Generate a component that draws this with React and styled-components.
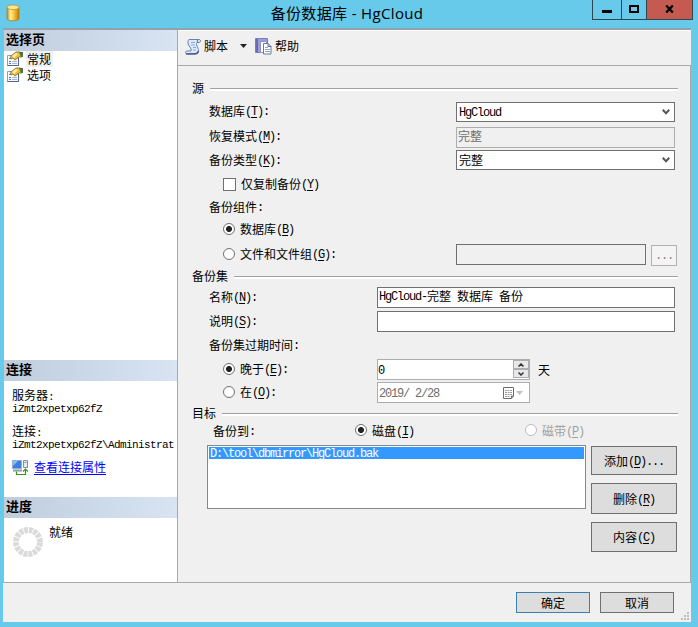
import React from 'react';
import styled, { createGlobalStyle, css } from 'styled-components';

// "&" marks the access key, as in native dialogs
const Caption = ({ children }) => (
  <span>
    {children.split(/([\x20-\x7e]+)/).map((part, i) => {
      if (i % 2 === 0) return part;
      const [before, after] = part.split('&');
      if (after === undefined) return <Latin key={i}>{part}</Latin>;
      return (
        <Latin key={i}>
          {before}
          <AccessKey>{after[0]}</AccessKey>
          {after.slice(1)}
        </Latin>
      );
    })}
  </span>
);

const DatabaseIcon = () => (
  <svg width="14" height="18" viewBox="0 0 14 18">
    <defs>
      <linearGradient id="gold" x1="0" x2="1" y1="0" y2="0">
        <stop offset="0" stopColor="#c98a12" />
        <stop offset="0.3" stopColor="#fff0a0" />
        <stop offset="0.55" stopColor="#fcc93a" />
        <stop offset="1" stopColor="#c07a08" />
      </linearGradient>
    </defs>
    <path d="M1 3.5v11c0 3 12 3 12 0v-11z" fill="url(#gold)" stroke="#a9791f" strokeWidth="0.7" />
    <ellipse cx="7" cy="3.3" rx="6" ry="2.3" fill="#fce98e" stroke="#b08a30" strokeWidth="0.7" />
  </svg>
);

const PageIcon = () => (
  <svg width="16" height="16" viewBox="0 0 16 16">
    <path d="M0.5 4.5h11v10h-11z" fill="#f7faff" stroke="#8b9cc0" />
    <path d="M0.5 14.5h11v-8" fill="none" stroke="#50648c" />
    <path d="M2 7.500h2M2 10.500h2M2 12.500h2" stroke="#5577c8" />
    <path d="M5 10.500h5M5 12.500h5" stroke="#a5b2d2" />
    <path d="M4 5l5-4h4l2 1v4h-3l-4 3-2-2-1.500 1-1-1z" fill="#f0bc34" stroke="#75642c" strokeWidth="0.8" />
    <path d="M5 5l4-3 2 1-4 4z" fill="#fff0a0" />
    <path d="M12 1l4 0v5l-2 0z" fill="#4b7547" />
  </svg>
);

const ScriptIcon = () => (
  <svg width="17" height="17" viewBox="0 0 17 17">
    <path d="M4 1.5h10c2 0 2 3 0 3h-2c-2 3 3 6 1 10-1 1-2 1.500-3 1.500H2c-2 0-2-3 0-3h4c1-3-3-5-3-8 0-2 0-3 1-3.500z" fill="#dce9fa" stroke="#6882ad" />
    <path d="M1 15.800h9c2 0 3-1 3.500-2.500" fill="none" stroke="#344d7d" strokeWidth="1.200" />
    <path d="M6 4.500h4M6 7h4M8 9.500h3M8 12h3" stroke="#8caad8" />
    <path d="M13 2c-1 1-1 2 0 2.500" fill="none" stroke="#45608f" />
  </svg>
);

const HelpIcon = () => (
  <svg width="17" height="17" viewBox="0 0 17 17">
    <path d="M0.5 0.5h12v14h-12z" fill="#9c9cd8" stroke="#7c7cbc" />
    <path d="M1 1h2v13h-2z" fill="#6a6ab2" />
    <path d="M5.500 3.500h5l2 2v9h-7z" fill="#fff" stroke="#8c96bc" />
    <path d="M8.500 5.500h4.500l3 3v7.500h-7.500z" fill="#fff" stroke="#647a9c" />
    <path d="M13 5.500v3h3" fill="none" stroke="#52688c" />
    <path d="M10 9.500h3M10 11.500h5M10 13.500h5" stroke="#8ea5c8" />
  </svg>
);

const ServerIcon = () => (
  <svg width="16" height="16" viewBox="0 0 16 16">
    <path d="M0.500 0.500h9v8h-9z" fill="#3d7fe0" stroke="#9babc5" />
    <path d="M1 1h5l-5 5z" fill="#7fc0fa" />
    <path d="M1 10.500h9" stroke="#8f9cb2" strokeWidth="2" />
    <path d="M11.500 0.500h4v7h-4z" fill="#e2e7f0" stroke="#8190ab" />
    <path d="M12.500 2.500h2" stroke="#8190ab" />
    <path d="M4.500 11.500v3h9V9.500M11 11.500l2.500-2.500 2.500 2.500" fill="none" stroke="#36941d" strokeWidth="1.200" />
  </svg>
);

const ProgressRing = () => (
  <svg width="30" height="30" viewBox="0 0 30 30">
    <circle
      cx="15"
      cy="15"
      r="12"
      fill="none"
      stroke="#dadada"
      strokeWidth="5.800"
      strokeDasharray="3.812 0.900"
      strokeDashoffset="-0.450"
    />
  </svg>
);

const ComboArrow = () => (
  <svg width="8" height="6" viewBox="0 0 8 6">
    <path d="M0.700 0.800L4 4.200 7.300 0.800" fill="none" stroke="#555" strokeWidth="2" />
  </svg>
);

const SpinArrow = ({ down }) => (
  <svg width="6" height="4" viewBox="0 0 6 4">
    <path d={down ? 'M0.500 0.500L3 3 5.500 0.500' : 'M0.500 3.500L3 1 5.500 3.500'} fill="none" stroke="#333" strokeWidth="1.500" />
  </svg>
);

const CalendarIcon = () => (
  <svg width="20" height="12" viewBox="0 0 20 12">
    <path d="M0.500 0.500h10v8.500l-2 2.500h-8z" fill="#fff" stroke="#746a6a" />
    <path d="M8.500 11v-2h2" fill="none" stroke="#746a6a" />
    <path d="M2 3.500h7M2 5.500h7M2 7.500h7M2 9.500h5" stroke="#9c9ca8" strokeDasharray="2 0.500" />
    <path d="M13 4h7l-3.500 4z" fill="#c2c2b8" />
  </svg>
);

const SizeGrip = () => (
  <Grip width="9" height="9" viewBox="0 0 9 9">
    <path d="M6 0h2v2h-2zM3 3h2v2h-2zM6 3h2v2h-2zM0 6h2v2h-2zM3 6h2v2h-2zM6 6h2v2h-2z" fill="#bdbdbd" />
  </Grip>
);

const App = () => (
  <>
    <GlobalStyle />
    <Window>
      <TitleBar>
        <TitleIcon>
          <DatabaseIcon />
        </TitleIcon>
        <Title>备份数据库 - HgCloud</Title>
        <WindowButtons>
          <WindowButton $width={29}>
            <svg width="10" height="3"><path d="M0 0h10v3H0z" /></svg>
          </WindowButton>
          <WindowButton $width={26}>
            <svg width="10" height="8"><path d="M1 1h8v6H1z" fill="none" stroke="#000" strokeWidth="2" /></svg>
          </WindowButton>
          <WindowButton $width={47} $close>
            <svg width="9" height="8"><path d="M1.200 0.500l6.600 7M7.800 0.500l-6.600 7" stroke="#000" strokeWidth="2.300" /></svg>
          </WindowButton>
        </WindowButtons>
      </TitleBar>

      <Body>
        <Sidebar>
          <PanelTitle>选择页</PanelTitle>
          <PageList>
            <PageItem>
              <PageIcon />
              <PageName $active>常规</PageName>
            </PageItem>
            <PageItem>
              <PageIcon />
              <PageName>选项</PageName>
            </PageItem>
          </PageList>
          <PanelTitle>连接</PanelTitle>
          <Connection>
            <InfoLine><Caption>服务器:</Caption></InfoLine>
            <InfoLine><Caption>iZmt2xpetxp62fZ</Caption></InfoLine>
            <InfoLine $gap><Caption>连接:</Caption></InfoLine>
            <InfoLine><Caption>iZmt2xpetxp62fZ\Administrat</Caption></InfoLine>
            <LinkLine>
              <ServerIcon />
              <Link>查看连接属性</Link>
            </LinkLine>
          </Connection>
          <PanelTitle>进度</PanelTitle>
          <Progress>
            <ProgressRing />
            <ProgressText>就绪</ProgressText>
          </Progress>
        </Sidebar>

        <Main>
          <Toolbar>
            <ScriptIcon />
            <ToolText>脚本</ToolText>
            <DropMark width="7" height="4"><path d="M0 0h7L3.500 4z" fill="#222" /></DropMark>
            <HelpIcon />
            <ToolText $wide>帮助</ToolText>
          </Toolbar>

          <Form>
            <Group $height={20}>源</Group>
            <Row $height={28}>
              <Label $up><Caption>数据库(&T):</Caption></Label>
              <Field $width={219} $height={20} $combo>
                <Caption>HgCloud</Caption>
                <ComboArrow />
              </Field>
            </Row>
            <Row $height={23}>
              <Label $up><Caption>恢复模式(&M):</Caption></Label>
              <Field $width={219} $height={21} $disabled>完整</Field>
            </Row>
            <Row $height={22}>
              <Label><Caption>备份类型(&K):</Caption></Label>
              <Field $width={219} $height={20} $combo>
                完整
                <ComboArrow />
              </Field>
            </Row>
            <Row $height={26} $indent>
              <CheckBox />
              <Label><Caption>仅复制备份(&Y)</Caption></Label>
            </Row>
            <Row $height={20}>
              <Label><Caption>备份组件:</Caption></Label>
            </Row>
            <Row $height={25} $indent>
              <Radio $checked />
              <Label><Caption>数据库(&B)</Caption></Label>
            </Row>
            <Row $height={25} $indent>
              <Radio />
              <Label><Caption>文件和文件组(&G):</Caption></Label>
              <Field $width={190} $height={21} $readOnly />
              <BrowseButton><Caption>...</Caption></BrowseButton>
            </Row>

            <Group $height={18}>备份集</Group>
            <Row $height={25}>
              <Label><Caption>名称(&N):</Caption></Label>
              <Field $width={298} $height={21}><Caption>HgCloud-完整 数据库 备份</Caption></Field>
            </Row>
            <Row $height={23}>
              <Label><Caption>说明(&S):</Caption></Label>
              <Field $width={298} $height={21} />
            </Row>
            <Row $height={24}>
              <Label><Caption>备份集过期时间:</Caption></Label>
            </Row>
            <Row $height={25} $indent>
              <Radio $checked />
              <Label><Caption>晚于(&E):</Caption></Label>
              <Field $width={153} $height={21} $light>
                <Caption>0</Caption>
                <Spinner>
                  <SpinButton><SpinArrow /></SpinButton>
                  <SpinButton><SpinArrow down /></SpinButton>
                </Spinner>
              </Field>
              <Unit>天</Unit>
            </Row>
            <Row $height={21} $indent>
              <Radio />
              <Label><Caption>在(&O):</Caption></Label>
              <Field $width={153} $height={21} $light $date>
                <Caption>2019/ 2/28</Caption>
                <CalendarIcon />
              </Field>
              <Unit />
            </Row>

            <Group $height={20}>目标</Group>
            <TargetRow>
              <Label><Caption>备份到:</Caption></Label>
              <Option>
                <Radio $checked />
                <Label><Caption>磁盘(&I)</Caption></Label>
              </Option>
              <Option $disabled>
                <Radio $disabled />
                <Label><Caption>磁带(&P)</Caption></Label>
              </Option>
            </TargetRow>
            <Destination>
              <FileList>
                <FileItem><Caption>D:\tool\dbmirror\HgCloud.bak</Caption></FileItem>
              </FileList>
              <ButtonColumn>
                <Button $height={29}><Caption>添加(&D)...</Caption></Button>
                <Button $height={31}><Caption>删除(&R)</Caption></Button>
                <Button $height={30}><Caption>内容(&C)</Caption></Button>
              </ButtonColumn>
            </Destination>
          </Form>
        </Main>
      </Body>

      <Footer>
        <Button $width={74} $height={21} $primary>确定</Button>
        <Button $width={74} $height={21}>取消</Button>
        <SizeGrip />
      </Footer>
    </Window>
  </>
);

const GlobalStyle = createGlobalStyle`
  * {
    box-sizing: border-box;
  }
  body {
    margin: 0;
    background: #67caea;
    color: #000;
    font: 12px/14px 'Noto Sans CJK SC', sans-serif;
    overflow: hidden;
  }
  svg {
    display: block;
    flex-shrink: 0;
  }
`;
const Latin = styled.span`
  font-family: 'Liberation Mono', monospace;
  font-size: 12px;
  letter-spacing: -1.2px;
  line-height: 10px;
  vertical-align: 1px;
  white-space: pre;
`;
const AccessKey = styled.span`
  text-decoration: underline;
  text-underline-offset: 2px;
`;
const Window = styled.div`
  width: 698px;
  height: 627px;
  padding: 0 7px 5px 3px;
  display: flex;
  flex-direction: column;
`;
const TitleBar = styled.div`
  height: 28px;
  display: grid;
  grid-template-columns: 107px 1fr 101px;
  margin-right: -2px;
`;
const TitleIcon = styled.div`
  padding: 4px 0 0 3px;
`;
const Title = styled.div`
  padding-right: 8px;
  font: 15px/27px 'Open Sans', 'Noto Sans CJK SC', sans-serif;
  letter-spacing: 0.35px;
  text-align: center;
`;
const WindowButtons = styled.div`
  display: flex;
`;
const WindowButton = styled.div`
  width: ${(props) => props.$width}px;
  height: 20px;
  display: flex;
  align-items: center;
  justify-content: center;
  border: 1px solid #30464f;
  border-top: 0;
  border-right-width: ${(props) => (props.$close ? '1px' : 0)};
  background: ${(props) => (props.$close ? '#c45a50' : 'transparent')};
  svg {
    margin-top: ${(props) => (props.$width === 29 ? '4px' : '-1px')};
  }
`;
const Body = styled.div`
  height: 555px;
  display: grid;
  grid-template-columns: 175px 1fr;
  border-top: 2px solid #8fa3ad;
  border-bottom: 1px solid #a9a9a9;
`;
const Sidebar = styled.div`
  display: flex;
  flex-direction: column;
  background: #fff;
  border-left: 1px solid #a5b5bd;
  border-right: 1px solid #a9a9a9;
  overflow: hidden;
`;
const PanelTitle = styled.div`
  height: 21px;
  flex-shrink: 0;
  padding-left: 2px;
  background: linear-gradient(90deg, #bfcddd, #d8e4f2);
  font-size: 13px;
  font-weight: bold;
  line-height: 17px;
`;
const PageList = styled.div`
  height: 309px;
`;
const PageItem = styled.div`
  display: flex;
  gap: 3px;
  height: 16px;
  padding-left: 3px;
`;
const PageName = styled.span`
  height: 16px;
  padding: 0 2px 0 1px;
  line-height: 15px;
  background: ${(props) => (props.$active ? '#f0f0f0' : 'transparent')};
`;
const Connection = styled.div`
  height: 116px;
  padding: 8px 0 0 8px;
`;
const InfoLine = styled.div`
  height: 12px;
  margin-top: ${(props) => (props.$gap ? '12px' : 0)};
  line-height: 12px;
  white-space: nowrap;
  ${Latin} {
    font-size: 11px;
    letter-spacing: -0.6px;
    line-height: 12px;
    vertical-align: baseline;
  }
`;
const LinkLine = styled.div`
  display: flex;
  gap: 6px;
  margin-top: 11px;
`;
const Link = styled.a`
  color: #0000ff;
  line-height: 13px;
  text-decoration: underline;
  text-underline-offset: 2px;
`;
const Progress = styled.div`
  display: flex;
  gap: 6px;
  padding: 9px 0 0 9px;
`;
const ProgressText = styled.div`
  margin-top: -2px;
`;
const Main = styled.div`
  background: #f0f0f0;
  border-top: 1px solid #fff;
`;
const Toolbar = styled.div`
  height: 35px;
  display: flex;
  align-items: center;
  padding: 0 0 3px 7px;
  border-bottom: 1px solid #a9a9a9;
`;
const ToolText = styled.span`
  margin: 0 0 2px ${(props) => (props.$wide ? '3px' : '2px')};
`;
const DropMark = styled.svg`
  margin: 0 8px 1px 12px;
`;
const Form = styled.div`
  height: 516px;
  padding: 12px 12px 0 14px;
  border-right: 1px solid #a9a9a9;
`;
const Group = styled.div`
  height: ${(props) => props.$height}px;
  display: flex;
  align-items: center;
  gap: 6px;
  &:after {
    content: '';
    flex: 1;
    height: 2px;
    margin-top: 2px;
    border-top: 1px solid #a0a0a0;
    background: #fff;
  }
`;
const Row = styled.div`
  height: ${(props) => props.$height}px;
  display: flex;
  align-items: center;
  padding: 0 3px 0 ${(props) => (props.$indent ? '31px' : '17px')};
`;
const Label = styled.label`
  flex: 1;
  white-space: nowrap;
  padding-bottom: ${(props) => (props.$up ? '3px' : '1px')};
`;
const Field = styled.div`
  width: ${(props) => props.$width}px;
  height: ${(props) => props.$height}px;
  display: flex;
  align-items: center;
  justify-content: space-between;
  padding: 0 4px 0 2px;
  border: 1px solid #707070;
  background: #fff;
  white-space: pre;
  ${(props) =>
    !props.$combo &&
    css`
      padding: 0 3px 3px 1px;
    `}
  ${(props) =>
    (props.$disabled || props.$readOnly) &&
    css`
      background: #f0f0f0;
      color: #6d6d6d;
    `}
  ${(props) =>
    (props.$disabled || props.$light) &&
    css`
      border-color: #abadb3;
    `}
  ${(props) =>
    props.$light &&
    css`
      padding: 0;
    `}
  ${(props) =>
    props.$date &&
    css`
      padding: 0 6px 0 1px;
      color: #6d6d6d;
    `}
`;
const CheckBox = styled.span`
  width: 13px;
  height: 13px;
  margin-right: 5px;
  border: 1px solid #707070;
  background: #fff;
`;
const Radio = styled.span`
  width: 12px;
  height: 12px;
  flex-shrink: 0;
  margin: 0 5px 2px 0;
  border: 1px solid ${(props) => (props.$disabled ? '#bcbcbc' : '#707070')};
  border-radius: 50%;
  background: ${(props) =>
    props.$checked ? 'radial-gradient(circle, #222 2.6px, #fff 3.4px)' : '#fff'};
`;
const BrowseButton = styled.button`
  width: 26px;
  height: 21px;
  margin: 2px -2px 0 5px;
  padding: 0;
  border: 1px solid #adb2b5;
  background: #f4f4f4;
  color: #838383;
`;
const Unit = styled.span`
  width: 145px;
  padding-left: 8px;
`;
const Spinner = styled.div`
  width: 16px;
  height: 18px;
  margin-bottom: 1px;
  display: grid;
  grid-template-rows: 9px 9px;
`;
const SpinButton = styled.div`
  display: flex;
  align-items: center;
  justify-content: center;
  border: 1px solid #abadb3;
  background: #e8e8e8;
`;
const TargetRow = styled.div`
  height: 16px;
  display: grid;
  grid-template-columns: 142px 170px 1fr;
  align-items: center;
  padding-left: 21px;
`;
const Option = styled.div`
  display: flex;
  align-items: center;
  color: ${(props) => (props.$disabled ? '#a0a0a0' : '#000')};
`;
const Destination = styled.div`
  display: flex;
  justify-content: space-between;
  padding: 6px 1px 0 15px;
`;
const FileList = styled.div`
  width: 379px;
  height: 64px;
  padding: 1px;
  border: 1px solid #828790;
  background: #fff;
`;
const FileItem = styled.div`
  height: 12px;
  padding-left: 1px;
  background: #3399ff;
  color: #fff;
  line-height: 11px;
`;
const ButtonColumn = styled.div`
  display: flex;
  flex-direction: column;
  gap: 8px;
  padding-top: 1px;
`;
const Button = styled.button`
  width: ${(props) => props.$width || 86}px;
  height: ${(props) => props.$height}px;
  padding: 0;
  border: 1px solid ${(props) => (props.$primary ? '#3c7fb1' : '#707070')};
  background: #dddddd;
  color: #000;
  font: inherit;
`;
const Footer = styled.div`
  position: relative;
  height: 39px;
  display: flex;
  justify-content: flex-end;
  gap: 10px;
  padding: 9px 17px 0 0;
  background: #f0f0f0;
`;
const Grip = styled.svg`
  position: absolute;
  right: 1px;
  bottom: 1px;
`;

export default App;
